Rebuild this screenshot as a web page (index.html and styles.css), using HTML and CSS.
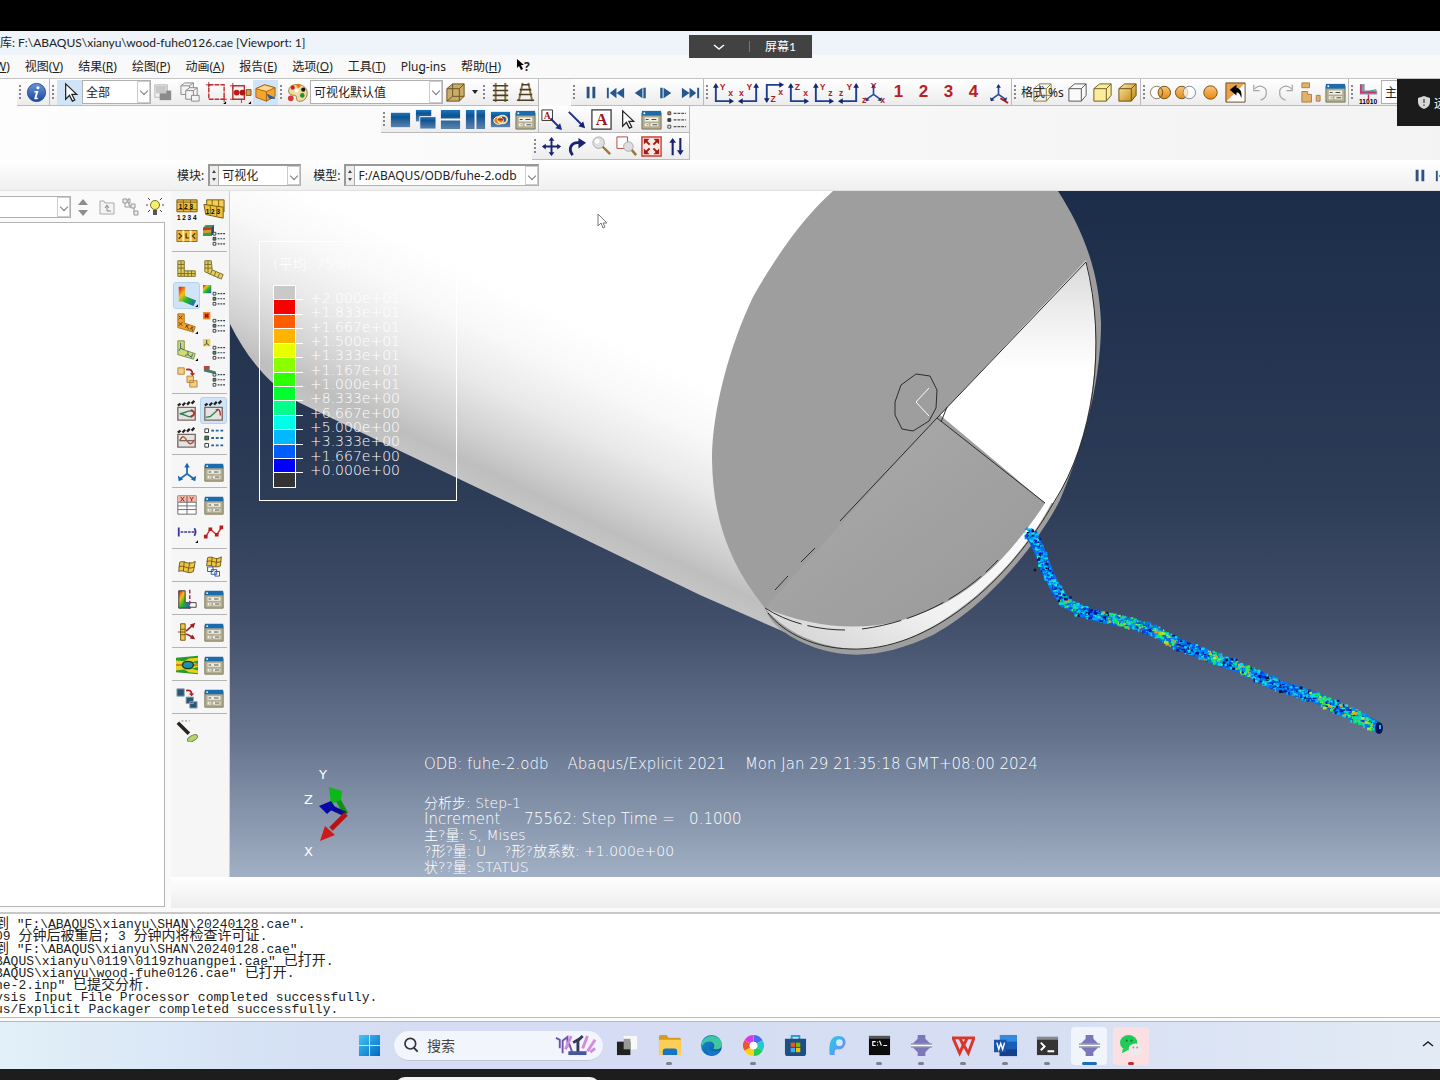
FILE: index.html
```html
<!DOCTYPE html>
<html lang="zh-CN">
<head>
    <meta charset="UTF-8">
    <meta name="viewport" content="width=device-width, initial-scale=1.0">
    <title>Abaqus/CAE</title>
    <link rel="stylesheet" href="styles.css">
</head>
<body>
    <!-- Icon sprite -->
    <svg class="sprite" width="0" height="0" aria-hidden="true">
        <defs>
            <linearGradient id="g-blue" x1="0" y1="0" x2="0" y2="1"><stop offset="0" stop-color="#1b78c0"/><stop offset=".3" stop-color="#0f5291"/><stop offset="1" stop-color="#5b84ad"/></linearGradient>
            <linearGradient id="g-info" x1="0" y1="0" x2="0" y2="1"><stop offset="0" stop-color="#6d95d6"/><stop offset="1" stop-color="#17479b"/></linearGradient>
            <linearGradient id="g-gold" x1="0" y1="0" x2="1" y2="1"><stop offset="0" stop-color="#ffe9a0"/><stop offset="1" stop-color="#b98412"/></linearGradient>
            <linearGradient id="g-orange" x1="0" y1="0" x2="0" y2="1"><stop offset="0" stop-color="#f9c47a"/><stop offset="1" stop-color="#e28a10"/></linearGradient>
            <linearGradient id="g-rain" x1="0" y1="0" x2="1" y2="1"><stop offset="0" stop-color="#e01010"/><stop offset=".3" stop-color="#f6c018"/><stop offset=".55" stop-color="#28b828"/><stop offset="1" stop-color="#1558d8"/></linearGradient>
            <linearGradient id="g-win" x1="0" y1="0" x2="1" y2="1"><stop offset="0" stop-color="#45c6f5"/><stop offset="1" stop-color="#0067c0"/></linearGradient>
            <linearGradient id="g-edge" x1="0" y1="0" x2="1" y2="1"><stop offset="0" stop-color="#1596d6"/><stop offset="1" stop-color="#0b4a9c"/></linearGradient>
            <linearGradient id="g-p" x1="0" y1="0" x2="1" y2="1"><stop offset="0" stop-color="#20d0e0"/><stop offset=".5" stop-color="#4aa8f0"/><stop offset="1" stop-color="#a86ae8"/></linearGradient>
        </defs>
        <symbol id="info" viewBox="0 0 24 24"><circle cx="12" cy="12" r="9.5" fill="url(#g-info)" stroke="#2a5298"/><circle cx="13.5" cy="7" r="1.6" fill="#fff"/><path d="M10 10.500h4l-2 7h2l-1 1.500h-3.500l2-7h-2z" fill="#fff"/></symbol>
        <symbol id="arrow" viewBox="0 0 24 24"><path d="M8 3v16l4-4 3 6 2.500-1.200-3-5.800h5z" fill="#fff" stroke="#222" stroke-width="1.300"/></symbol>
        <symbol id="squares" viewBox="0 0 24 24"><path d="M3 4h13v13H3z" fill="#f2f2f2" stroke="#b5b5b5"/><path d="M8 10h12v10H8z" fill="#8b8b8b"/><path d="M4 5h11v8H4z" fill="#c8c8c8"/></symbol>
        <symbol id="wirecubes" viewBox="0 0 24 24"><g fill="#f4f4f4" stroke="#888"><path d="M2 5l4-3h9v8l-4 4H2zM2 5h9v9M11 5l4-3"/><path d="M7 10l4-3h8v8l-4 4H7zM7 10h8v9M15 10l4-3"/><path d="M13 15h8v6h-8z"/></g></symbol>
        <symbol id="dashbox" viewBox="0 0 24 24"><path d="M5 4h16v15H5z" fill="none" stroke="#c03030" stroke-width="1.500" stroke-dasharray="5 1"/><path d="M2 4h6M5 1v6M18 19h6M21 16v6" stroke="#a03030"/><path d="M23 21v3h-3z"/></symbol>
        <symbol id="dotbox" viewBox="0 0 24 24"><path d="M4 5h12v14H4z" fill="none" stroke="#c03030" stroke-width="1.500"/><path d="M1 5h6M4 2v6M1 19h5M13 19v4" stroke="#c03030"/><circle cx="8" cy="12" r="3" fill="#c01818"/><circle cx="14" cy="12" r="3" fill="#b01414"/><path d="M18 9h5v6h-5z" fill="#d6a24a" stroke="#76521a"/><path d="M23 21v3h-3z"/></symbol>
        <symbol id="box" viewBox="0 0 24 24"><path d="M2 8l9-4 11 3v9l-9 5-11-4z" fill="#f3a530" stroke="#a8660d"/><path d="M2 8l11 3 9-4-11-3z" fill="#ffd68a" stroke="#a8660d"/><path d="M13 11v10" stroke="#a8660d"/><path d="M22 18l-8-4 2 4z" fill="#2a5aa8" stroke="#2a5aa8"/></symbol>
        <symbol id="palette" viewBox="0 0 24 24"><path d="M3 9c1-7 17-8 19 2 1 7-4 11-9 10-4-1 0-5-4-6-4 0-7-2-6-6z" fill="#f0dca0" stroke="#9a7a34"/><circle cx="7" cy="7" r="2.200" fill="#d02020"/><circle cx="13" cy="5" r="2.200" fill="#e07a18"/><circle cx="18" cy="9" r="2.200" fill="#181818"/><circle cx="17" cy="15" r="2.400" fill="#22902a"/><circle cx="11" cy="10" r="2" fill="#fff"/><circle cx="5" cy="18" r="3" fill="#d83a3a"/></symbol>
        <symbol id="tancube" viewBox="0 0 24 24"><path d="M3 8l6-5h12v13l-5 5H3z" fill="#c8ab66"/><path d="M3 8h13v13H3zM3 8l6-5h12v13l-5 5M16 8l5-5M9 3v13l-6 5M9 16h12" fill="none" stroke="#6b5422"/></symbol>
        <symbol id="ladder" viewBox="0 0 24 24"><path d="M7 2v20M17 2v20" stroke="#8a7440" stroke-width="2"/><path d="M4 5h16M4 10h16M4 15h16M4 20h16" stroke="#4c3f20" stroke-width="1.600"/></symbol>
        <symbol id="ladder2" viewBox="0 0 24 24"><path d="M9 2L5 21M15 2l4 19" stroke="#8a7440" stroke-width="2"/><path d="M8 4h8M6 9h12M5 14h14M3 20h18" stroke="#4c3f20" stroke-width="1.600"/></symbol>
        <symbol id="pause" viewBox="0 0 24 24"><path d="M8 6h3v12H8zM14 6h3v12h-3z" fill="#2c5283"/></symbol>
        <symbol id="first" viewBox="0 0 24 24"><path d="M3 7h2v11H3zM13 7v11l-7-5.500zM21 7v11l-8-5.500z" fill="#24588f"/></symbol>
        <symbol id="prev" viewBox="0 0 24 24"><path d="M14 7v11l-8-5.500zM15 7h2.500v11H15z" fill="#24588f"/></symbol>
        <symbol id="next" viewBox="0 0 24 24"><path d="M10 7v11l8-5.500zM6.500 7H9v11H6.500z" fill="#24588f"/></symbol>
        <symbol id="last" viewBox="0 0 24 24"><path d="M19 7h2v11h-2zM11 7v11l7-5.500zM3 7v11l8-5.500z" fill="#24588f"/></symbol>
        <symbol id="ax-r" viewBox="0 0 24 24"><path d="M4 5v16h15" fill="none" stroke="#1d3f95" stroke-width="2"/><path d="M1 7l3-5 3 5zM18 18l5 3-5 3z" fill="#14266e"/></symbol>
        <symbol id="ax-l" viewBox="0 0 24 24"><path d="M20 5v16H5" fill="none" stroke="#1d3f95" stroke-width="2"/><path d="M17 7l3-5 3 5zM6 18l-5 3 5 3z" fill="#14266e"/></symbol>
        <symbol id="ax-d" viewBox="0 0 24 24"><path d="M5 19V4h14" fill="none" stroke="#1d3f95" stroke-width="2"/><path d="M2 18l3 5 3-5zM18 1l5 3-5 3z" fill="#14266e"/></symbol>
        <symbol id="triad" viewBox="0 0 24 24"><path d="M12 5v9l-7 5M12 14l7 5" fill="none" stroke="#2a4a9a" stroke-width="1.700"/><path d="M9.500 7L12 3l2.500 4zM3 17l1 4 4-1zM21 17l-1 4-4-1z" fill="#16307c"/></symbol>
        <symbol id="triad-blue" viewBox="0 0 24 24"><path d="M12 5v9l-7 5M12 14l7 5" fill="none" stroke="#2a6db0" stroke-width="2"/><path d="M9 7l3-5 3 5zM2 16l1 6 5-2zM22 16l-1 6-5-2z" fill="#1667b8"/></symbol>
        <symbol id="cube-w" viewBox="0 0 24 24"><path d="M3 8l6-5h12v12l-5 6H3z" fill="#fafafa"/><path d="M3 8h13v13H3zM3 8l6-5h12v12l-5 6M16 8l5-5" fill="none" stroke="#555"/></symbol>
        <symbol id="cube-y" viewBox="0 0 24 24"><path d="M3 8l6-5h12v12l-5 6H3z" fill="#fbec9c"/><path d="M3 8h13v13H3zM3 8l6-5h12v12l-5 6M16 8l5-5" fill="none" stroke="#6c5d20"/></symbol>
        <symbol id="cube-g" viewBox="0 0 24 24"><path d="M3 8l6-5h12v12l-5 6H3z" fill="url(#g-gold)"/><path d="M3 8h13v13H3zM3 8l6-5h12v12l-5 6M16 8l5-5" fill="none" stroke="#6c5010"/></symbol>
        <symbol id="cube-f" viewBox="0 0 24 24"><path d="M3 8h13v13H3zM3 8l6-5h12v12l-5 6M16 8l5-5M9 3v12l-6 6M9 15h12" fill="none" stroke="#8b813c"/></symbol>
        <symbol id="both" viewBox="0 0 24 24"><circle cx="8" cy="12" r="6.5" fill="#fff" stroke="#8b7a5a"/><circle cx="16" cy="12" r="6.5" fill="url(#g-orange)" stroke="#6b4e1c"/><path d="M12 7a6.500 6.500 0 0 1 0 10" fill="none" stroke="#6b4e1c"/></symbol>
        <symbol id="union" viewBox="0 0 24 24"><circle cx="8" cy="12" r="6.5" fill="url(#g-orange)" stroke="#6b4e1c"/><circle cx="16" cy="12" r="6.5" fill="#fff" fill-opacity=".7" stroke="#7788a0"/></symbol>
        <symbol id="dot" viewBox="0 0 24 24"><circle cx="12" cy="12" r="7" fill="url(#g-orange)" stroke="#7c5410"/></symbol>
        <symbol id="swap" viewBox="0 0 24 24"><path d="M2 2h20v20H2z" fill="#fff"/><path d="M2 2h20L2 22z" fill="#e9a24a"/><path d="M2 2h20v20H2z" fill="none" stroke="#6a4c20"/><path d="M6 9l7-5v3c5 1 6 6 5 11-1-4-2-6-5-6v3z"/></symbol>
        <symbol id="undo" viewBox="0 0 24 24"><path d="M6 8c5-5 13-2 12 5 0 4-3 6-6 7M5 4v6h6" fill="none" stroke="#a4a4a4" stroke-width="1.300"/></symbol>
        <symbol id="redo" viewBox="0 0 24 24"><path d="M18 8c-5-5-13-2-12 5 0 4 3 6 6 7M19 4v6h-6" fill="none" stroke="#a4a4a4" stroke-width="1.300"/></symbol>
        <symbol id="parts" viewBox="0 0 24 24"><path d="M3 2h8v5H3zM3 11h6v3h4v8H3zM18 15h4v6h-4z" fill="#e5b168" stroke="#a08050"/></symbol>
        <symbol id="dialog" viewBox="0 0 24 24"><path d="M2 5h20v17H2z" fill="#b3ae92" stroke="#777358"/><path d="M2 3h20v5H2z" fill="#1c6cad"/><circle cx="4.500" cy="5.500" r="1" fill="#fff"/><path d="M5 10h14v4H5zM5 16h4v3H5zM11 16h8v3h-8z" fill="#f2f1e6"/><path d="M6 12h3M12 12h5M7 17.500h1M13 17.500h5" stroke="#444"/></symbol>
        <symbol id="beam" viewBox="0 0 24 24"><path d="M3 3h5v7h13v4H3z" fill="#8d93a8"/><path d="M4 4v9M5 12h15" stroke="#c8306a" stroke-width="1.500"/><path d="M8 12l12-3" stroke="#1c9a8a"/><path d="M12 14v5" stroke="#c03060" stroke-width="1.500"/></symbol>
        <symbol id="win1" viewBox="0 0 24 24"><path d="M2 5h20v15H2z" fill="url(#g-blue)"/></symbol>
        <symbol id="win-cas" viewBox="0 0 24 24"><path d="M2 2h16v12H2z" fill="url(#g-blue)"/><path d="M6 9h17v13H6z" fill="url(#g-blue)" stroke="#f6f6f6"/></symbol>
        <symbol id="win-h" viewBox="0 0 24 24"><path d="M2 2h20v9H2zM2 13h20v9H2z" fill="url(#g-blue)"/></symbol>
        <symbol id="win-v" viewBox="0 0 24 24"><path d="M2 2h9v20H2zM13 2h9v20h-9z" fill="url(#g-blue)"/></symbol>
        <symbol id="win-link" viewBox="0 0 24 24"><path d="M2 4h20v16H2z" fill="url(#g-blue)"/><ellipse cx="10" cy="13" rx="5" ry="4" fill="#e88218" stroke="#fff"/><ellipse cx="14" cy="12" rx="5" ry="4" fill="none" stroke="#ffe6a8" stroke-width="1.800"/><path d="M9 12h6" stroke="#c02818" stroke-width="2"/></symbol>
        <symbol id="a-arrow" viewBox="0 0 24 24"><path d="M2 2h11v11H2z" fill="#fff" stroke="#333"/><path d="M11 11l10 10" stroke="#1c2c88" stroke-width="2"/><path d="M23 23l-7-2 5-5z" fill="#1c2c88"/></symbol>
        <symbol id="line-arrow" viewBox="0 0 24 24"><path d="M4 4l14 14" stroke="#1c2c88" stroke-width="2"/><path d="M21 21l-7-2 5-5z" fill="#14206c"/></symbol>
        <symbol id="a-box" viewBox="0 0 24 24"><path d="M2 2h20v20H2z" fill="#fff" stroke="#333" stroke-width="1.300"/></symbol>
        <symbol id="list" viewBox="0 0 24 24"><g fill="#fff" stroke="#444"><path d="M3 4h3v3H3z" fill="#d89838"/><path d="M3 11h3v3H3z" fill="#1a3a66"/><path d="M3 18h3v3H3z"/></g><path d="M9 5.500h13M9 12.500h13M9 19.500h13" stroke="#555" stroke-width="1.300" stroke-dasharray="3 1"/></symbol>
        <symbol id="move" viewBox="0 0 24 24"><path d="M12 4v16M4 12h16" stroke="#1c2470" stroke-width="2"/><path d="M9 6l3-4 3 4zM9 18l3 4 3-4zM6 9l-4 3 4 3zM18 9l4 3-4 3z" fill="#1c2470"/></symbol>
        <symbol id="rotate" viewBox="0 0 24 24"><path d="M8 21c-5-6-2-14 7-13" fill="none" stroke="#1c2470" stroke-width="3"/><path d="M14 3l8 5-8 6z" fill="#1c2470"/></symbol>
        <symbol id="zoomer" viewBox="0 0 24 24"><path d="M13 12l8 8" stroke="#9a7638" stroke-width="2.500"/><circle cx="9" cy="8" r="6" fill="#dedede" stroke="#aaa"/><circle cx="7.500" cy="6.500" r="2.500" fill="#fff"/></symbol>
        <symbol id="zoombox" viewBox="0 0 24 24"><path d="M2 2h11v12H2z" fill="#fff" stroke="#b84444"/><path d="M17 15l5 6" stroke="#9a7638" stroke-width="2.500"/><circle cx="14" cy="12" r="5" fill="#dedede" stroke="#aaa"/></symbol>
        <symbol id="fit" viewBox="0 0 24 24"><path d="M2 2h20v20H2z" fill="#fce9e4" stroke="#d03c34" stroke-width="1.500"/><path d="M4 4h6l-6 6zM20 4h-6l6 6zM4 20h6l-6-6zM20 20h-6l6-6z" fill="#a01c18"/><path d="M6 6l4 4M18 6l-4 4M6 18l4-4M18 18l-4-4" stroke="#a01c18" stroke-width="2"/></symbol>
        <symbol id="updown" viewBox="0 0 24 24"><path d="M8 5v16M16 3v16" stroke="#1c2470" stroke-width="2.200"/><path d="M4.500 8L8 3l3.500 5zM12.500 16l3.500 5 3.500-5z" fill="#1c2470"/></symbol>
        <symbol id="film" viewBox="0 0 24 24"><path d="M1 2h22v13H1z" fill="#f0c040" stroke="#6c5410"/><path d="M8 2v13M16 2v13M1 4.500h22M1 12.500h22" stroke="#7c6010"/></symbol>
        <symbol id="film2" viewBox="0 0 24 24"><path d="M4 2h19v13H4z" fill="#f4cf4c" stroke="#6c5410"/><path d="M1 7l21 3v12L3 18z" fill="#f0c040" stroke="#6c5410"/><path d="M8 8v10M15 9v11M10 2v6M17 2v7" stroke="#7c6010"/></symbol>
        <symbol id="film3" viewBox="0 0 24 24"><path d="M1 6h22v12H1z" fill="#f0b83c" stroke="#8c6410"/><path d="M8 6v12M16 6v12" stroke="#fff3c8" stroke-width="2"/><path d="M3 9l3 3-3 3M11 9v5h3M21 9l-3 3 3 3" fill="none" stroke="#553c08" stroke-width="1.500"/></symbol>
        <symbol id="opts" viewBox="0 0 24 24"><g fill="#fff" stroke="#333"><path d="M11 8h3v3h-3zM11 19h3v3h-3z"/><path d="M11 13.500h3v3h-3z" fill="#5a9a68"/></g><path d="M16 9.500h8M16 15h8M16 20.500h8" stroke="#28425e" stroke-width="1.300" stroke-dasharray="2 1"/></symbol>
        <symbol id="c-layers" viewBox="0 0 24 24"><path d="M0 3l3-3h9v9l-3 3H0z" fill="#3c9a4a"/><path d="M0 3h9v3H0z" fill="#c83434"/><path d="M0 6l12-1v3l-12 1z" fill="#d8a020"/><path d="M9 3l3-3v9l-3 3z" fill="#235088"/></symbol>
        <symbol id="mesh" viewBox="0 0 24 24"><path d="M2 3h7v11h12v6H2z" fill="#e6cf58"/><path d="M2 3h7v11h12v6H2zM5.500 3v17M2 7h7M2 11h7M2 17h19M9 14v6M13 14v6M17 14v6" fill="none" stroke="#74682a"/></symbol>
        <symbol id="mesh-d" viewBox="0 0 24 24"><path d="M2 3h7l1 10 12 5-2 5-18-8z" fill="#e6cf58"/><path d="M2 3h7l1 10 12 5-2 5-18-8zM5.500 3v13M2 7h7M2 11h8M10 13l-2 5M14 15l-2 5M18 17l-2 5" fill="none" stroke="#74682a"/></symbol>
        <symbol id="contour" viewBox="0 0 24 24"><path d="M3 2h7v10l12 5-3 6-12-5H3z" fill="url(#g-rain)"/><path d="M24 21v3h-3z"/></symbol>
        <symbol id="c-rain" viewBox="0 0 24 24"><path d="M0 0h9v9H0z" fill="url(#g-rain)"/></symbol>
        <symbol id="mesh-x" viewBox="0 0 24 24"><path d="M2 2h7v10l12 4-2 6-17-5z" fill="#f0a030" stroke="#a0761c"/><path d="M3 4l4 4M7 4L3 8M3 11l4 4M7 11l-4 4M11 14l3 5M14 14l-4 3M17 16l1 5M19 16l-4 3" stroke="#684010"/><path d="M24 21v3h-3z"/></symbol>
        <symbol id="c-x" viewBox="0 0 24 24"><path d="M0 0h8v8H0z" fill="#f38a20"/><path d="M2 2l4 4M6 2L2 6" stroke="#b01010" stroke-width="2"/></symbol>
        <symbol id="mesh-y" viewBox="0 0 24 24"><path d="M2 2h7v10l12 4-2 6-17-5z" fill="#cfdc74" stroke="#7c8a3c"/><path d="M5 4v6l-2 3M5 10l4 2M13 13v4M10 18l3-1 4 3M18 16l-1 4" stroke="#2c5a88" fill="none"/><path d="M24 21v3h-3z"/></symbol>
        <symbol id="c-y" viewBox="0 0 24 24"><path d="M0 0h8v8H0z" fill="#ecd45a"/><path d="M4 1v4L1 7M4 5l3 2" stroke="#444" fill="none"/></symbol>
        <symbol id="overlay" viewBox="0 0 24 24"><path d="M2 2h7v7H2zM12 11h7v7h-7zM15 16h8v7h-8z" fill="#f4cd80" stroke="#b4843c"/><path d="M11 4c5-1 7 1 7 5" fill="none" stroke="#b02020" stroke-width="2"/><path d="M15 8h6l-3 3z" fill="#b02020"/></symbol>
        <symbol id="c-multi" viewBox="0 0 24 24"><path d="M1 0h6v4l7 2v3L1 6z" fill="#4a7a68"/><path d="M1 0h6v3H1z" fill="#b44"/></symbol>
        <symbol id="clap" viewBox="0 0 24 24"><path d="M2 8h19v14H2z" fill="#e4e2e2" stroke="#7a6a6a" stroke-width="1.500"/><path d="M2 6l3-2M7 6l3-3M12 5l3-3M17 4l3-3" stroke="#222" stroke-width="2.500"/></symbol>
        <symbol id="opts-big" viewBox="0 0 24 24"><g fill="#fff" stroke="#333"><path d="M2 2h4v4H2zM2 18h4v4H2z"/><path d="M2 10h4v4H2z" fill="#3a8a50"/></g><path d="M9 4h15M9 12h15M9 20h15" stroke="#28629e" stroke-width="2" stroke-dasharray="3 2"/></symbol>
        <symbol id="xytable" viewBox="0 0 24 24"><path d="M2 2h20v20H2z" fill="#fff" stroke="#666"/><path d="M2 2h20v7H2z" fill="#efb8a8"/><path d="M2 9h20M2 13h20M2 17h20M12 2v20" stroke="#666"/><path d="M5 3l4 5M9 3L5 8M15 3l2 3 2-3M17 6v2" fill="none" stroke="#a01818"/></symbol>
        <symbol id="probe" viewBox="0 0 24 24"><path d="M3 7v10M20 8c2 3 2 5 0 8" stroke="#38389c" stroke-width="2" fill="none"/><path d="M5 12h15" stroke="#38389c" stroke-width="1.800" stroke-dasharray="3 1"/><path d="M24 21v3h-3z"/></symbol>
        <symbol id="zigzag" viewBox="0 0 24 24"><path d="M3 17l5-8 7 6 6-9" fill="none" stroke="#c43030" stroke-width="1.500"/><path d="M1 15h4v4H1zM6 7h4v4H6zM13 13h4v4h-4zM18 5h4v4h-4z" fill="#b81c1c"/></symbol>
        <symbol id="flag" viewBox="0 0 24 24"><path d="M4 8c5-3 8 4 17-1l-2 11c-7 4-10-3-16 0z" fill="#eec548" stroke="#6d5412"/><path d="M3 13c6-3 9 4 17 0M9 7L8 18M15 8l-2 11" fill="none" stroke="#6d5412"/></symbol>
        <symbol id="flag2" viewBox="0 0 24 24"><path d="M5 3c5-3 8 4 15-1l-1 10c-7 3-9-2-15 0z" fill="#eec548" stroke="#6d5412"/><path d="M4 7c6-2 9 3 16 0M10 2L9 12M15 4l-1 9" fill="none" stroke="#6d5412"/><path d="M5 13h6v5H5zM9 16h6v5H9zM13 18h5v5h-5z" fill="#fff" stroke="#2b4d9a"/></symbol>
        <symbol id="cut" viewBox="0 0 24 24"><path d="M3 3h7v13h5v6H3z" fill="url(#g-rain)" stroke="#333"/><path d="M15 16h7v5h-7" fill="#fff" stroke="#333"/><path d="M15 2v21" stroke="#b02060" stroke-width="1.600" stroke-dasharray="4 2"/></symbol>
        <symbol id="burst" viewBox="0 0 24 24"><path d="M5 3h5v18H5z" fill="#eec548" stroke="#6d5412"/><path d="M5 9h5M5 15h5M2 12h8" stroke="#6d5412"/><path d="M11 11l8-7M11 14l8 4" stroke="#9c2020" stroke-width="1.700"/><path d="M21 2l-6 2 4 4zM21 20l-6-1 3-4z" fill="#9c2020"/></symbol>
        <symbol id="flow" viewBox="0 0 24 24"><path d="M0 4l24-2v20L0 20z" fill="#2c9a28"/><path d="M0 7l9 1 5-3 10-1v3l-7 2 7 2v3l-7 2 7 2v3l-10-1-5-3-9 1z" fill="#e8d020"/><path d="M0 12h24" stroke="#c82020"/><ellipse cx="13" cy="12" rx="6" ry="4" fill="#2290a8" stroke="#0d3f20" stroke-width="1.500"/></symbol>
        <symbol id="stack" viewBox="0 0 24 24"><path d="M1 2h8v8H1zM11 11h8v7h-8zM15 16h8v7h-8z" fill="#2d5476" stroke="#8aa"/><path d="M11 4c5-1 6 1 6 4" fill="none" stroke="#b02020" stroke-width="2"/><path d="M14 7h6l-3 3z" fill="#b02020"/></symbol>
        <symbol id="pen" viewBox="0 0 24 24"><path d="M2 3l12 12" stroke="#2a2420" stroke-width="4"/><path d="M6 1h9" stroke="#777" stroke-dasharray="2 2"/><ellipse cx="18" cy="20" rx="6" ry="3" transform="rotate(-30 18 20)" fill="#b7d36c" stroke="#6f8844"/></symbol>
        <symbol id="spin" viewBox="0 0 24 24"><path d="M7 10l5-6 5 6zM7 15l5 6 5-6z" fill="#8d8d8d"/></symbol>
        <symbol id="folder-up" viewBox="0 0 24 24"><path d="M5 8V6h4l1 2h9v11H5z" fill="#f4f4f4" stroke="#aaa"/><path d="M10 13l2-3 2 3M12 11v5h4" fill="none" stroke="#888"/></symbol>
        <symbol id="tree" viewBox="0 0 24 24"><path d="M6 7v5h7M10 7v4h5v7" fill="none" stroke="#999"/><path d="M4 4h4v4H4zM12 9h4v4h-4zM9 4h2v4H9zM15 16h4v4h-4z" fill="#eee" stroke="#999"/></symbol>
        <symbol id="bulb" viewBox="0 0 24 24"><circle cx="12" cy="10" r="4.500" fill="#f6ef6a" stroke="#777030"/><path d="M10 15h4v5h-4z" fill="#555"/><path d="M5 10H3M21 10h-2M7 5L5 3M17 5l2-2M7 15l-2 2M17 15l2 2" stroke="#444"/></symbol>
        <!-- Taskbar -->
        <symbol id="windows" viewBox="0 0 24 24"><path d="M1 1h10.500v10.500H1zM12.500 1H23v10.500H12.500zM1 12.500h10.500V23H1zM12.500 12.500H23V23H12.500z" fill="url(#g-win)"/></symbol>
        <symbol id="mag" viewBox="0 0 24 24"><circle cx="11" cy="10" r="8" fill="none" stroke="#333" stroke-width="2.500"/><path d="M16 16l6 6" stroke="#333" stroke-width="3"/></symbol>
        <symbol id="doodle" viewBox="0 0 44 24"><path d="M1 4l4 2v9M8 20V7l5-4v11M13 5l5 14" fill="none" stroke="#7156a8" stroke-width="2"/><path d="M11 16l6-14M29 15l5-13M34 18l8-12M37 19l5-4" stroke="#d58ae0" stroke-width="3"/><path d="M24 19V6l-5 3M24 7l5-5" fill="none" stroke="#343852" stroke-width="3"/><path d="M14 18h19v4H14z" fill="#4656a0"/></symbol>
        <symbol id="taskview" viewBox="0 0 24 24"><path d="M8 2h14v14H8z" fill="#f8f8f8"/><path d="M1 8h14v14H1z" fill="#222"/><path d="M8 5h7v11H8z" fill="#999"/></symbol>
        <symbol id="explorer" viewBox="0 0 24 24"><path d="M1 3q0-2 2-2h6l2 3h11q2 0 2 2v16H1z" fill="#d99a20"/><path d="M1 6h23v16H1z" fill="#fbcf55"/><path d="M5 22v-4q0-3 3-3h9q3 0 3 3v4z" fill="#1775c4"/></symbol>
        <symbol id="edge" viewBox="0 0 24 24"><circle cx="12" cy="12" r="11" fill="url(#g-edge)"/><path d="M2 9C6-1 22 0 23 11c0 5-6 6-9 4 3-4-1-8-5-7-4 0-6 2-7 6z" fill="#40c7a0"/><path d="M9 11c-2 5 3 9 12 6-2 3-5 6-9 6-5-1-7-8-3-12z" fill="#1478cc"/></symbol>
        <symbol id="ring" viewBox="0 0 24 24"><circle cx="12" cy="12" r="11" fill="#fff"/><g fill="none" stroke-width="7"><path d="M12 4.500A7.500 7.500 0 0 1 18.500 8.250" stroke="#4a6df0"/><path d="M18.500 8.250A7.500 7.500 0 0 1 18.500 15.750" stroke="#20c8d0"/><path d="M18.500 15.750A7.500 7.500 0 0 1 12 19.500" stroke="#25c85a"/><path d="M12 19.500A7.500 7.500 0 0 1 5.500 15.750" stroke="#f2d51c"/><path d="M5.500 15.750A7.500 7.500 0 0 1 5.500 8.250" stroke="#f2542c"/><path d="M5.500 8.250A7.500 7.500 0 0 1 12 4.500" stroke="#da3be0"/></g><circle cx="12" cy="12" r="4" fill="#fff"/></symbol>
        <symbol id="store" viewBox="0 0 24 24"><path d="M8 6V2h8v4" fill="none" stroke="#2a9fd8" stroke-width="2"/><path d="M1 5h22v15q0 3-3 3H4q-3 0-3-3z" fill="#1c4f82"/><path d="M7 9h4.500v4.500H7z" fill="#f25022"/><path d="M12.500 9H17v4.500h-4.500z" fill="#7fba00"/><path d="M7 14.500h4.500V19H7z" fill="#2fb4f0"/><path d="M12.500 14.500H17V19h-4.500z" fill="#ffb900"/></symbol>
        <symbol id="papp" viewBox="0 0 24 24"><path d="M4 22c-1-8-1-20 9-20 11 0 9 15-1 14-3 0-3 2-3 6z" fill="url(#g-p)"/><circle cx="14" cy="9" r="3.500" fill="#cdeaff"/></symbol>
        <symbol id="cmd" viewBox="0 0 24 24"><path d="M1 2h22v20H1z" fill="#0c0c0c"/><path d="M1 2h22v3H1z" fill="#555"/><path d="M8 8H5v4h3M10 8v1M10 11v1M12 7l2 5M16 12h4" fill="none" stroke="#fff" stroke-width="1.200"/></symbol>
        <symbol id="abq" viewBox="0 0 24 24"><path d="M8 1h8v4l5 5H3l5-5zM3 14h18l-5 5v4H8v-4z" fill="#7a78b8"/><path d="M1 10h22v4H1z" fill="#62628a"/><path d="M1 11h22v2H1z" fill="#fff"/></symbol>
        <symbol id="wps" viewBox="0 0 24 24"><path d="M1 4h22l-6 16-5-9-4 9zM8 4l4 8 4-8" fill="none" stroke="#dd3428" stroke-width="3"/></symbol>
        <symbol id="word" viewBox="0 0 24 24"><path d="M6 1h18v22H6z" fill="#2f8ae0"/><path d="M6 8h18v15H6z" fill="#1c5cb6"/><path d="M6 16h18v7H6z" fill="#143f8a"/><path d="M0 6h13v13H0z" fill="#1a55aa"/><path d="M3 9l2 7 2-6 2 6 2-7" fill="none" stroke="#fff" stroke-width="1.500"/></symbol>
        <symbol id="term" viewBox="0 0 24 24"><path d="M1 3h22v19H1z" fill="#343434"/><path d="M1 3h22v3H1z" fill="#8a8a8a"/><path d="M5 9l4 4-4 4M12 18h7" fill="none" stroke="#fff" stroke-width="2"/></symbol>
        <symbol id="wechat" viewBox="0 0 24 24"><ellipse cx="9" cy="9" rx="9" ry="8" fill="#20cc58"/><path d="M3 15l-1 5 6-3z" fill="#20cc58"/><circle cx="7" cy="7" r="1.200" fill="#14803a"/><circle cx="12" cy="7" r="1.200" fill="#14803a"/><ellipse cx="16" cy="16" rx="7" ry="6" fill="#efe9e9"/><circle cx="14" cy="14" r="1" fill="#999"/><circle cx="18" cy="14" r="1" fill="#999"/></symbol>
        <symbol id="chev-down" viewBox="0 0 12 12"><path d="M1 4l5 4 5-4" fill="none" stroke="currentColor" stroke-width="1.500"/></symbol>
    </svg>

    <div class="top-strip"></div>

    <header class="title-bar">
        <span>库: F:\ABAQUS\xianyu\wood-fuhe0126.cae [Viewport: 1]</span>
        <div class="screen-tab">
            <button aria-label="展开"><svg class="chev"><use href="#chev-down"/></svg></button>
            <span>屏幕1</span>
        </div>
    </header>

    <nav class="menu-bar">
        <button><u>W</u>)</button>
        <button>视图(<u>V</u>)</button>
        <button>结果(<u>R</u>)</button>
        <button>绘图(<u>P</u>)</button>
        <button>动画(<u>A</u>)</button>
        <button>报告(<u>E</u>)</button>
        <button>选项(<u>O</u>)</button>
        <button>工具(<u>T</u>)</button>
        <button>Plu<u>g</u>-ins</button>
        <button>帮助(<u>H</u>)</button>
        <button class="whats-this"><svg width="8" height="12" viewBox="0 0 8 12"><path d="M1 0v9l2-2 2 4 2-1-2-4h3z"/></svg>?</button>
    </nav>

    <div class="toolbars">
        <div class="toolbar-row first-row">
            <div class="toolbar main-tools">
                <i class="grip"></i>
                <button class="tool" aria-label="信息"><svg><use href="#info"/></svg></button>
                <i class="split"></i><i class="grip"></i>
                <button class="tool on" aria-label="选择"><svg><use href="#arrow"/></svg></button>
                <span class="combo combo-all"><select aria-label="选择范围"><option>全部</option></select></span>
                <button class="tool" aria-label="替换"><svg><use href="#squares"/></svg></button>
                <i class="space"></i>
                <button class="tool" aria-label="实体"><svg><use href="#wirecubes"/></svg></button>
                <button class="tool" aria-label="框选"><svg><use href="#dashbox"/></svg></button>
                <button class="tool" aria-label="框内"><svg><use href="#dotbox"/></svg></button>
                <button class="tool on" aria-label="外部实体"><svg><use href="#box"/></svg></button>
                <i class="grip"></i>
                <button class="tool" aria-label="颜色"><svg><use href="#palette"/></svg></button>
                <span class="combo combo-color"><select aria-label="颜色编码"><option>可视化默认值</option></select></span>
                <button class="tool" aria-label="半透明"><svg><use href="#tancube"/></svg></button>
                <button class="drop" aria-label="更多"></button>
                <i class="grip"></i>
                <button class="tool" aria-label="平行"><svg><use href="#ladder"/></svg></button>
                <button class="tool" aria-label="透视"><svg><use href="#ladder2"/></svg></button>
            </div>
            <div class="toolbar view-tools">
                <i class="grip"></i>
                <button class="tool" aria-label="暂停"><svg><use href="#pause"/></svg></button>
                <button class="tool" aria-label="首帧"><svg><use href="#first"/></svg></button>
                <button class="tool" aria-label="上一帧"><svg><use href="#prev"/></svg></button>
                <button class="tool" aria-label="下一帧"><svg><use href="#next"/></svg></button>
                <button class="tool" aria-label="末帧"><svg><use href="#last"/></svg></button>
                <i class="split"></i><i class="grip"></i>
                <button class="tool axis"><svg viewBox="0 0 24 24"><use href="#ax-r"/><text x="8" y="9">Y</text><text x="17" y="16">x</text></svg></button>
                <button class="tool axis"><svg viewBox="0 0 24 24"><use href="#ax-l"/><text x="10" y="9">Y</text><text x="2" y="16">x</text></svg></button>
                <button class="tool axis"><svg viewBox="0 0 24 24"><use href="#ax-d"/><text x="17" y="15">x</text><text x="9" y="22">Z</text></svg></button>
                <button class="tool axis"><svg viewBox="0 0 24 24"><use href="#ax-r"/><text x="8" y="9">Z</text><text x="17" y="16">x</text></svg></button>
                <button class="tool axis"><svg viewBox="0 0 24 24"><use href="#ax-r"/><text x="8" y="9">Y</text><text x="17" y="16">z</text></svg></button>
                <button class="tool axis"><svg viewBox="0 0 24 24"><use href="#ax-l"/><text x="10" y="9">Y</text><text x="2" y="16">z</text></svg></button>
                <button class="tool axis"><svg viewBox="0 0 24 24"><use href="#triad"/><text x="9" y="8">Y</text><text x="0" y="23">z</text><text x="19" y="23">x</text></svg></button>
                <button class="tool num">1</button>
                <button class="tool num">2</button>
                <button class="tool num">3</button>
                <button class="tool num">4</button>
                <button class="tool" aria-label="自定义视图"><svg viewBox="0 0 24 24"><use href="#triad"/><path d="M14 18l8 5" stroke="#b01818" stroke-width="2"/></svg></button>
                <i class="split"></i><i class="grip"></i>
                <button class="tool format"><svg><use href="#cube-f"/></svg><span>格式 %s</span></button>
                <button class="tool" aria-label="隐藏线"><svg><use href="#cube-w"/></svg></button>
                <button class="tool" aria-label="填充"><svg><use href="#cube-y"/></svg></button>
                <button class="tool" aria-label="阴影"><svg><use href="#cube-g"/></svg></button>
                <i class="split"></i><i class="grip"></i>
                <button class="tool" aria-label="替换"><svg><use href="#both"/></svg></button>
                <button class="tool" aria-label="移除"><svg><use href="#union"/></svg></button>
                <button class="tool" aria-label="全部"><svg><use href="#dot"/></svg></button>
                <button class="tool" aria-label="反转"><svg><use href="#swap"/></svg></button>
                <button class="tool" aria-label="撤销"><svg><use href="#undo"/></svg></button>
                <button class="tool" aria-label="重做"><svg><use href="#redo"/></svg></button>
                <button class="tool" aria-label="显示组"><svg><use href="#parts"/></svg></button>
                <button class="tool" aria-label="管理器"><svg><use href="#dialog"/></svg></button>
                <i class="split"></i><i class="grip"></i>
                <button class="tool beam"><svg viewBox="0 0 24 24"><use href="#beam"/><text x="2" y="24">11010</text></svg></button>
                <span class="combo combo-main"><select aria-label="场输出"><option>主变量</option></select></span>
            </div>
            <div class="safe-badge">
                <svg width="12" height="13" viewBox="0 0 12 13"><path d="M6 0l6 2v4q0 5-6 7Q0 11 0 6V2z" fill="#d8d8d8"/><path d="M6 3v4M6 8.500v1.500" stroke="#555" stroke-width="1.500"/></svg>
                <span>远程</span>
            </div>
        </div>
        <div class="toolbar-row">
            <div class="toolbar window-tools">
                <i class="grip"></i>
                <button class="tool" aria-label="新建视口"><svg><use href="#win1"/></svg></button>
                <button class="tool" aria-label="层叠"><svg><use href="#win-cas"/></svg></button>
                <button class="tool" aria-label="水平平铺"><svg><use href="#win-h"/></svg></button>
                <button class="tool" aria-label="垂直平铺"><svg><use href="#win-v"/></svg></button>
                <button class="tool" aria-label="链接视口"><svg><use href="#win-link"/></svg></button>
                <button class="tool" aria-label="视口管理器"><svg><use href="#dialog"/></svg></button>
                <i class="split"></i>
                <button class="tool note"><svg viewBox="0 0 24 24"><use href="#a-arrow"/><text x="4" y="11" font-size="10">A</text></svg></button>
                <button class="tool" aria-label="箭头"><svg><use href="#line-arrow"/></svg></button>
                <button class="tool note"><svg viewBox="0 0 24 24"><use href="#a-box"/><text x="6" y="18" font-size="17">A</text></svg></button>
                <button class="tool" aria-label="编辑注释"><svg><use href="#arrow"/></svg></button>
                <button class="tool" aria-label="注释管理器"><svg><use href="#dialog"/></svg></button>
                <button class="tool" aria-label="注释选项"><svg><use href="#list"/></svg></button>
            </div>
        </div>
        <div class="toolbar-row">
            <div class="toolbar pan-tools">
                <i class="grip"></i>
                <button class="tool" aria-label="平移"><svg><use href="#move"/></svg></button>
                <button class="tool" aria-label="旋转"><svg><use href="#rotate"/></svg></button>
                <button class="tool" aria-label="缩放"><svg><use href="#zoomer"/></svg></button>
                <button class="tool" aria-label="框缩放"><svg><use href="#zoombox"/></svg></button>
                <button class="tool" aria-label="适应"><svg><use href="#fit"/></svg></button>
                <button class="tool" aria-label="循环"><svg><use href="#updown"/></svg></button>
            </div>
        </div>
    </div>

    <div class="context-bar">
        <label for="module">模块:</label>
        <span class="combo stepped combo-module"><i class="steps"></i><select id="module"><option>可视化</option></select></span>
        <label for="model">模型:</label>
        <span class="combo stepped combo-model"><i class="steps"></i><select id="model"><option>F:/ABAQUS/ODB/fuhe-2.odb</option></select></span>
        <div class="play">
            <button class="tool" aria-label="暂停"><svg><use href="#pause"/></svg></button>
            <button class="tool" aria-label="首帧"><svg><use href="#first"/></svg></button>
        </div>
    </div>

    <main class="workspace">
        <aside class="model-tree">
            <div class="tree-tools">
                <span class="combo combo-tree"><select aria-label="会话数据"><option></option></select></span>
                <button aria-label="上下"><svg><use href="#spin"/></svg></button>
                <button aria-label="上级"><svg><use href="#folder-up"/></svg></button>
                <button aria-label="展开树"><svg><use href="#tree"/></svg></button>
                <button aria-label="提示"><svg><use href="#bulb"/></svg></button>
            </div>
            <div class="tree-pane"></div>
        </aside>

        <div class="toolbox">
            <div class="toolset">
                <button class="small-text"><svg viewBox="0 0 24 24"><use href="#film"/><text x="3" y="12">1 2 3</text><text x="1" y="24">1 2 3 4</text></svg></button>
                <button class="small-text"><svg viewBox="0 0 24 24"><use href="#film2"/><text x="3" y="17">1 2 3</text></svg></button>
                <button aria-label="帧选择"><svg><use href="#film3"/></svg></button>
                <button aria-label="结果选项"><svg viewBox="0 0 24 24"><use href="#c-layers"/><use href="#opts"/></svg></button>
            </div>
            <div class="toolset">
                <button aria-label="未变形图"><svg><use href="#mesh"/></svg></button>
                <button aria-label="变形图"><svg><use href="#mesh-d"/></svg></button>
                <button class="on" aria-label="云图"><svg><use href="#contour"/></svg></button>
                <button aria-label="云图选项"><svg viewBox="0 0 24 24"><use href="#c-rain"/><use href="#opts"/></svg></button>
                <button aria-label="符号图"><svg><use href="#mesh-x"/></svg></button>
                <button aria-label="符号选项"><svg viewBox="0 0 24 24"><use href="#c-x"/><use href="#opts"/></svg></button>
                <button aria-label="材料方向"><svg><use href="#mesh-y"/></svg></button>
                <button aria-label="方向选项"><svg viewBox="0 0 24 24"><use href="#c-y"/><use href="#opts"/></svg></button>
                <button aria-label="叠加"><svg><use href="#overlay"/></svg></button>
                <button aria-label="通用选项"><svg viewBox="0 0 24 24"><use href="#c-multi"/><use href="#opts"/></svg></button>
            </div>
            <div class="toolset">
                <button aria-label="缩放动画"><svg viewBox="0 0 24 24"><use href="#clap"/><path d="M4 15c6 0 8-4 14-3M4 15c6 0 8 5 14 3" fill="none" stroke="#2b7f4c" stroke-width="1.500"/><path d="M16 11c5 1 5 6 0 7" fill="none" stroke="#b22c2c" stroke-width="2"/></svg></button>
                <button class="on" aria-label="时间历程动画"><svg viewBox="0 0 24 24"><use href="#clap"/><path d="M3 19l5-1 8-7" fill="none" stroke="#2b8f4c" stroke-width="1.500"/><path d="M14 11c3-2 5 0 5 6" fill="none" stroke="#b22c2c" stroke-width="1.500"/></svg></button>
                <button aria-label="谐波动画"><svg viewBox="0 0 24 24"><use href="#clap"/><path d="M4 15h16" stroke="#333"/><path d="M4 15c4-8 6-3 8 0s5 6 8-1" fill="none" stroke="#b4542c" stroke-width="1.500"/></svg></button>
                <button aria-label="动画选项"><svg><use href="#opts-big"/></svg></button>
            </div>
            <div class="toolset single">
                <button aria-label="坐标系"><svg><use href="#triad-blue"/></svg></button>
                <button aria-label="坐标系管理器"><svg><use href="#dialog"/></svg></button>
            </div>
            <div class="toolset">
                <button aria-label="XY数据"><svg><use href="#xytable"/></svg></button>
                <button aria-label="XY管理器"><svg><use href="#dialog"/></svg></button>
                <button aria-label="路径"><svg><use href="#probe"/></svg></button>
                <button aria-label="XY选项"><svg><use href="#zigzag"/></svg></button>
            </div>
            <div class="toolset single">
                <button aria-label="场输出"><svg><use href="#flag"/></svg></button>
                <button aria-label="创建场输出"><svg><use href="#flag2"/></svg></button>
            </div>
            <div class="toolset single">
                <button aria-label="视图切割"><svg><use href="#cut"/></svg></button>
                <button aria-label="切割管理器"><svg><use href="#dialog"/></svg></button>
            </div>
            <div class="toolset single">
                <button aria-label="自由体"><svg><use href="#burst"/></svg></button>
                <button aria-label="自由体管理器"><svg><use href="#dialog"/></svg></button>
            </div>
            <div class="toolset single">
                <button aria-label="流线"><svg><use href="#flow"/></svg></button>
                <button aria-label="流线管理器"><svg><use href="#dialog"/></svg></button>
            </div>
            <div class="toolset single">
                <button aria-label="叠加图"><svg><use href="#stack"/></svg></button>
                <button aria-label="叠加管理器"><svg><use href="#dialog"/></svg></button>
            </div>
            <div class="toolset last">
                <button aria-label="清理"><svg><use href="#pen"/></svg></button>
            </div>
        </div>

        <section class="viewport">
            <svg class="scene" viewBox="230 191 1210 686" preserveAspectRatio="xMinYMin slice">
                <defs>
                    <linearGradient id="shade" gradientUnits="userSpaceOnUse" x1="457" y1="478" x2="540" y2="305">
                        <stop offset="0" stop-color="#c4c4c4"/><stop offset=".1" stop-color="#bebebe"/><stop offset=".25" stop-color="#d0d0d0"/><stop offset=".5" stop-color="#e9e9e9"/><stop offset=".75" stop-color="#f8f8f8"/><stop offset="1" stop-color="#fff"/>
                    </linearGradient>
                    <linearGradient id="fan" x1="0" y1="0" x2="1" y2="1"><stop offset="0" stop-color="#acacac"/><stop offset=".5" stop-color="#a2a2a2"/><stop offset="1" stop-color="#989898"/></linearGradient>
                    <linearGradient id="inner" x1="0" y1="0" x2="0" y2="1"><stop offset="0" stop-color="#d8d8d8"/><stop offset=".2" stop-color="#ececec"/><stop offset=".45" stop-color="#fff"/></linearGradient>
                    <linearGradient id="lip" x1="0" y1="1" x2="1" y2="0"><stop offset="0" stop-color="#cfcfcf"/><stop offset=".4" stop-color="#f0f0f0"/><stop offset="1" stop-color="#fff"/></linearGradient>
                </defs>
                <!-- cylinder -->
                <path d="M230 191H1000L840 640L820 649L780 630L700 595L543 519L457 478L377 440L298 402C270 385 248 360 230 324Z" fill="url(#shade)"/>
                <path d="M833 191C802 218 772 263 753 297C730 345 712 410 712 460C713 520 730 565 765 608C768 618 776 627 790 636C835 662 880 660 933 635C990 604 1040 540 1060 500C1090 430 1101 370 1101 323C1099 270 1083 230 1058 191Z" fill="#9e9e9e"/>
                <!-- hopper opening and lower lip -->
                <path d="M1086 260L940 415L1045 503H1054C1092 440 1107 345 1086 260Z" fill="url(#inner)"/>
                <path d="M765 608C790 638 830 650 865 649C940 643 1020 565 1052 502L1045 503C980 600 910 650 765 608Z" fill="url(#lip)"/>
                <path d="M765 608L937 418L1045 503C975 610 880 655 765 608Z" fill="url(#fan)"/>
                <g fill="none" stroke="#2c2c2c">
                    <path d="M1086 262L937 418L840 521M815 548L801 562M788 576L775 590"/>
                    <path d="M937 418L1045 503M947 407L941 422"/>
                    <path d="M765 608C790 624 820 630 845 630M862 629C930 620 975 585 998 560" stroke-dasharray="40 6"/>
                    <path d="M1086 262C1107 345 1094 440 1054 502C1010 580 930 652 850 649C815 648 785 634 768 613"/>
                    <path d="M916 374L930 376L937 390L936 408L929 421L913 431L902 429L895 415L895 402L901 385Z"/>
                    <path d="M929 388L916 402L929 416" stroke="#fff"/>
                </g>
                <!-- wire rope, coloured elements are added by the script -->
                <path id="rope" d="M1028 532C1036 540 1040 551 1043 560L1050 577Q1057 592 1064 600Q1076 611 1100 617L1123 621Q1147 627 1167 638L1187 648L1213 657L1240 668L1277 685L1317 698L1353 715L1378 727" fill="none" stroke="#0c6ce0" stroke-width="11"/>
                <g id="elements"></g>
                <ellipse cx="1379" cy="728" rx="4" ry="6" fill="#04145c"/><path d="M1380 725v4" stroke="#4ad" stroke-width="2"/>
                <circle cx="1035" cy="570" r="1.500" fill="#101828"/>
                <!-- triad -->
                <path d="M346 814L337 798" stroke="#0a9410" stroke-width="5"/><path d="M329 787L342 791L341 800L331 804Z" fill="#0cb818"/>
                <path d="M345 814L332 808" stroke="#0a0a8c" stroke-width="5"/><path d="M319 806L331 801L335 807L327 814Z" fill="#0808a8"/>
                <path d="M346 814L331 829" stroke="#b41414" stroke-width="5"/><path d="M325 826L335 835L320 841Z" fill="#d01818"/>
                <g class="triad-text"><text x="319" y="779">Y</text><text x="304" y="804">Z</text><text x="304" y="856">X</text></g>
                <path d="M598 214v12l3-3 2 5 2-1-2-4h4z" fill="#fff" stroke="#777"/>
            </svg>

            <div class="legend">
                <p class="legend-title">(平均: 75%)</p>
                <div class="legend-body">
                    <div class="swatches">
                        <i class="c0"></i><i class="c1"></i><i class="c2"></i><i class="c3"></i><i class="c4"></i><i class="c5"></i><i class="c6"></i>
                        <i class="c7"></i><i class="c8"></i><i class="c9"></i><i class="c10"></i><i class="c11"></i><i class="c12"></i><i class="c13"></i>
                    </div>
                    <div class="values">
                        <span>+2.000e+01</span><span>+1.833e+01</span><span>+1.667e+01</span><span>+1.500e+01</span><span>+1.333e+01</span>
                        <span>+1.167e+01</span><span>+1.000e+01</span><span>+8.333e+00</span><span>+6.667e+00</span><span>+5.000e+00</span>
                        <span>+3.333e+00</span><span>+1.667e+00</span><span>+0.000e+00</span>
                    </div>
                </div>
            </div>

            <div class="state">
                <p class="odb wide">ODB: fuhe-2.odb    Abaqus/Explicit 2021    Mon Jan 29 21:35:18 GMT+08:00 2024</p>
                <p>分析步: Step-1</p>
                <p class="wide">Increment     75562: Step Time =   0.1000</p>
                <p>主?量: S, Mises</p>
                <p>?形?量: U    ?形?放系数: +1.000e+00</p>
                <p>状??量: STATUS</p>
            </div>
        </section>
    </main>

    <section class="messages">
        <p><b>到</b> "F:\ABAQUS\xianyu\SHAN\20240128.cae".</p>
        <p>09 <b>分钟后被重启</b>; 3 <b>分钟内将检查许可证</b>.</p>
        <p><b>到</b> "F:\ABAQUS\xianyu\SHAN\20240128.cae".</p>
        <p>BAQUS\xianyu\0119\0119zhuangpei.cae" <b>已打开</b>.</p>
        <p>BAQUS\xianyu\wood-fuhe0126.cae" <b>已打开</b>.</p>
        <p>he-2.inp" <b>已提交分析</b>.</p>
        <p>ysis Input File Processor completed successfully.</p>
        <p>us/Explicit Packager completed successfully.</p>
    </section>

    <footer class="taskbar">
        <button class="app start" aria-label="开始"><svg><use href="#windows"/></svg></button>
        <label class="search">
            <svg class="mag"><use href="#mag"/></svg>
            <input type="text" placeholder="搜索">
            <svg class="doodle"><use href="#doodle"/></svg>
        </label>
        <button class="app" aria-label="任务视图"><svg><use href="#taskview"/></svg></button>
        <button class="app open" aria-label="资源管理器"><svg><use href="#explorer"/></svg></button>
        <button class="app" aria-label="Edge"><svg><use href="#edge"/></svg></button>
        <button class="app open" aria-label="浏览器"><svg><use href="#ring"/></svg></button>
        <button class="app" aria-label="商店"><svg><use href="#store"/></svg></button>
        <button class="app" aria-label="应用"><svg><use href="#papp"/></svg></button>
        <button class="app open" aria-label="命令提示符"><svg><use href="#cmd"/></svg></button>
        <button class="app open" aria-label="Abaqus"><svg><use href="#abq"/></svg></button>
        <button class="app open" aria-label="WPS"><svg><use href="#wps"/></svg></button>
        <button class="app open" aria-label="Word"><svg><use href="#word"/></svg></button>
        <button class="app open" aria-label="终端"><svg><use href="#term"/></svg></button>
        <button class="app open active" aria-label="Abaqus/CAE"><svg><use href="#abq"/></svg></button>
        <button class="app open alert" aria-label="微信"><svg><use href="#wechat"/></svg></button>
        <button class="tray" aria-label="隐藏的图标"><svg class="chev up"><use href="#chev-down"/></svg></button>
    </footer>
    <div class="bottom-strip"><i></i></div>

    <script src="script.js"></script>
</body>
</html>
```

FILE: styles.css
```css
:root {
    --ui: "Noto Sans", "Noto Sans CJK SC", sans-serif;
    --line: #b4b4b4;
    --on: #cfe5f7;
}

* {
    box-sizing: border-box;
    margin: 0;
    padding: 0;
}

body {
    height: 100vh;
    display: flex;
    flex-direction: column;
    overflow: hidden;
    background: #fafafa;
    color: #222;
    font-family: var(--ui);
    font-size: 12px;
}

button {
    border: none;
    background: none;
    font: inherit;
    color: inherit;
}

select, input {
    font: inherit;
    color: inherit;
    border: none;
    background: none;
    outline: none;
    appearance: none;
}

.sprite {
    position: absolute;
}

.top-strip {
    height: 31px;
    flex: none;
    background: #000;
}

/* Title and menu */
.title-bar {
    position: relative;
    height: 24px;
    flex: none;
    background: #eff3fa;
    font-family: Lato, "Noto Sans CJK SC", sans-serif;
    line-height: 23px;
    white-space: nowrap;
}

.screen-tab {
    position: absolute;
    top: 4px;
    left: 689px;
    width: 123px;
    height: 23px;
    display: flex;
    align-items: center;
    background: #424242;
    color: #fff;
    z-index: 2;
}

.screen-tab button {
    width: 61px;
    height: 11px;
    border-right: 1px solid #777;
    display: flex;
    justify-content: center;
}

.screen-tab span {
    padding-left: 15px;
}

.chev {
    width: 12px;
    height: 12px;
}

.chev.up {
    transform: rotate(180deg);
}

.menu-bar {
    height: 23px;
    flex: none;
    display: flex;
    gap: 15px;
    margin-left: -5px;
    background: #f9f9f9;
}

.menu-bar button {
    line-height: 22px;
    white-space: nowrap;
}

.menu-bar .whats-this {
    font-weight: bold;
}

/* Toolbars */
.toolbars {
    flex: none;
    background: linear-gradient(90deg, #fdfdfd, #f3f3f3);
}

.toolbar-row {
    position: relative;
    height: 27px;
    display: flex;
}

.first-row {
    height: 28px;
    border-top: 1px solid #c4c4c4;
}

.toolbar {
    display: flex;
    align-items: center;
    flex: none;
    border-right: 1px solid #bbb;
    border-bottom: 1px solid #bbb;
    background: linear-gradient(#fff, #ececec);
}

.main-tools {
    margin-left: 17px;
}

.view-tools {
    margin-left: 32px;
}

.window-tools {
    margin-left: 381px;
}

.pan-tools {
    margin-left: 532px;
}

.grip {
    width: 7px;
    height: 16px;
    flex: none;
    background: radial-gradient(circle at 3px 2px, #888 1px, transparent 1px) 0 0 / 7px 4px;
}

.split {
    width: 1px;
    align-self: stretch;
    background: #bbb;
}

.space {
    width: 2px;
}

.tool {
    width: 25px;
    height: 25px;
    flex: none;
    display: flex;
    align-items: center;
    justify-content: center;
}

.tool svg {
    width: 23px;
    height: 23px;
}

.tool.on {
    background: var(--on);
}

.drop {
    width: 13px;
    height: 25px;
    flex: none;
    display: flex;
    align-items: center;
    justify-content: center;
}

.drop::before {
    content: "";
    border: 3px solid transparent;
    border-top: 4px solid #222;
    border-bottom: none;
}

.axis text {
    font: bold 9px "Liberation Sans", sans-serif;
    fill: #ab2222;
}

.num {
    font: bold 17px "Liberation Sans", sans-serif;
    color: #b8201c;
}

.note text {
    font-family: "Liberation Serif", serif;
    font-weight: bold;
    fill: #a01420;
}

.beam text {
    font: bold 7px "Liberation Sans", sans-serif;
}

.format {
    position: relative;
    width: 46px;
}

.format span {
    position: absolute;
    left: 2px;
    font-size: 12px;
    white-space: nowrap;
}

.combo {
    position: relative;
    height: 24px;
    flex: none;
    display: flex;
    background: #fff;
    border: 1px solid #b0b0b0;
}

.combo select {
    width: 100%;
    padding-left: 3px;
    padding-right: 10px;
}

/* chevron */
.combo::after {
    content: "";
    position: absolute;
    right: 3px;
    top: 7px;
    width: 5px;
    height: 5px;
    border: solid #777;
    border-width: 0 1px 1px 0;
    transform: rotate(45deg);
    pointer-events: none;
}

.combo::before {
    content: "";
    position: absolute;
    right: 0;
    top: 0;
    bottom: 0;
    width: 11px;
    border: 1px solid #ccc;
    pointer-events: none;
}

.combo-all {
    width: 69px;
}

.combo-color {
    width: 133px;
}

.combo-main {
    width: 57px;
}

.safe-badge {
    position: absolute;
    right: 0;
    top: 0;
    width: 43px;
    height: 47px;
    padding-left: 21px;
    display: flex;
    align-items: center;
    gap: 4px;
    overflow: hidden;
    background: #1b1b1b;
    color: #fff;
    white-space: nowrap;
    z-index: 2;
}

.safe-badge svg {
    flex: none;
}

.context-bar {
    height: 31px;
    flex: none;
    display: flex;
    align-items: center;
    padding-left: 177px;
    background: linear-gradient(#fff, #f0f0f0);
    border-bottom: 1px solid #e2e2e2;
}

.context-bar .combo {
    height: 22px;
    margin: 0 12px 0 4px;
    border-top: 2px solid #999;
    border-left: 2px solid #999;
}

.combo-module {
    width: 93px;
}

.combo-model {
    width: 195px;
}

.steps {
    width: 9px;
    flex: none;
    display: flex;
    flex-direction: column;
    align-items: center;
    justify-content: space-evenly;
    border-right: 1px solid #aaa;
    background: #eee;
}

.steps::before, .steps::after {
    content: "";
    border: 2px solid transparent;
}

.steps::before {
    border-bottom: 3px solid #444;
    border-top: none;
}

.steps::after {
    border-top: 3px solid #444;
    border-bottom: none;
}

.play {
    flex: 1;
    display: flex;
    justify-content: flex-end;
    margin-right: -17px;
}

/* Workspace */
.workspace {
    flex: 1;
    min-height: 0;
    display: flex;
    background: linear-gradient(#f7f7f7 0 686px, #fff 686px, #ededed);
}

.model-tree {
    width: 171px;
    flex: none;
    display: flex;
    flex-direction: column;
    padding-right: 6px;
    background: #fafafa;
}

.tree-tools {
    height: 31px;
    flex: none;
    display: flex;
    align-items: center;
}

.tree-tools button {
    width: 25px;
    height: 24px;
}

.tree-tools button svg {
    width: 24px;
    height: 24px;
}

.combo-tree {
    width: 71px;
    height: 22px;
    border-left: none;
}

.tree-pane {
    flex: 1;
    background: #fff;
    border: 1px solid var(--line);
    border-left: none;
    margin-bottom: 1px;
}

.toolbox {
    width: 59px;
    flex: none;
    padding: 3px 2px 0 1px;
    border-right: 1px solid #d0d0d0;
    background: #f6f6f6;
    margin-bottom: 31px;
}

.toolset {
    display: flex;
    flex-wrap: wrap;
    padding: 3px 0 3px 1px;
    border-bottom: 1px solid var(--line);
}

.toolset:first-child {
    padding-top: 1px;
    padding-bottom: 2px;
}

.toolset.single {
    padding-bottom: 2px;
}

.toolset.last {
    border: none;
}

.toolset button {
    width: 27px;
    height: 27px;
    display: flex;
    align-items: center;
    justify-content: center;
}

.toolset svg {
    width: 22px;
    height: 22px;
}

.toolset .on {
    background: var(--on);
    border: 1px solid #b4d2ea;
    border-radius: 3px;
}

.small-text text {
    font: bold 7px "Liberation Sans", sans-serif;
}

/* Viewport */
.viewport {
    position: relative;
    flex: 1;
    margin-bottom: 31px;
    overflow: hidden;
    background: linear-gradient(#1b2d49, #2d3c57 45%, #424f6b 63%, #66748e 80%, #a2b0c5);
    color: #fff;
    font-family: "DejaVu Sans", "Noto Sans CJK SC", sans-serif;
    font-weight: 200;
    font-size: 14px;
}

.scene {
    position: absolute;
    width: 100%;
    height: 100%;
}

.triad-text {
    fill: #fff;
    font-size: 13px;
    font-weight: 400;
}

.legend {
    position: absolute;
    left: 29px;
    top: 50px;
    width: 198px;
    height: 260px;
    padding: 15px 0 0 13px;
    border: 1px solid #fff;
    line-height: 14px;
}

.legend-title {
    height: 28px;
}

.legend-body {
    display: flex;
}

.swatches {
    width: 23px;
    height: 203px;
    display: flex;
    flex-direction: column;
    border: 1px solid #fff;
}

.swatches i {
    position: relative;
    flex: 1;
    border-bottom: 1px solid #fff;
}

.swatches i::after {
    content: "";
    position: absolute;
    left: 22px;
    bottom: -1px;
    width: 7px;
    height: 1px;
    background: #fff;
}

.c0 { background: #c9c9c9; }
.c1 { background: #f80000; }
.c2 { background: #ff5d00; }
.c3 { background: #ffb400; }
.c4 { background: #e8ff00; }
.c5 { background: #8bff00; }
.c6 { background: #2eff00; }
.c7 { background: #00ff2e; }
.c8 { background: #00ff8b; }
.c9 { background: #00ffe8; }
.c10 { background: #00b9ff; }
.c11 { background: #005dff; }
.c12 { background: #0000ff; }
.swatches .c13 { background: #333; border: none; }
.swatches .c13::after { display: none; }

.values {
    height: 186px;
    margin: 6px 0 0 14px;
    display: flex;
    flex-direction: column;
    justify-content: space-between;
}

.state {
    position: absolute;
    left: 194px;
    bottom: 2px;
    line-height: 16px;
}

.state p {
    height: 16px;
    white-space: pre;
}

.state .wide {
    font-size: 15px;
}

.state .odb {
    margin-bottom: 23px;
}

/* Message area */
.messages {
    height: 106px;
    flex: none;
    margin-top: 4px;
    padding: 4px 0 1px;
    display: flex;
    flex-direction: column;
    justify-content: space-between;
    overflow: hidden;
    background: #fff;
    border-top: 2px solid #c8c8c8;
    border-bottom: 1px solid #bbb;
    font-family: "Liberation Mono", "Noto Sans CJK SC", monospace;
    font-size: 13px;
    line-height: 12px;
}

.messages p {
    height: 12px;
    margin-left: -5px;
    white-space: pre;
}

.messages b {
    font-weight: normal;
    font-size: 14px;
}

/* Taskbar */
.taskbar {
    height: 48px;
    flex: none;
    margin-top: 3px;
    padding-left: 348px;
    display: flex;
    align-items: center;
    border-top: 1px solid #b4b9c4;
    background: linear-gradient(90deg, #e2f0f8, #d6e2f5 18%, #d5dcf3 30%, #d6def3 70%, #e2ebf5);
}

.app {
    position: relative;
    width: 42px;
    height: 38px;
    flex: none;
    display: flex;
    align-items: center;
    justify-content: center;
}

.app svg {
    width: 23px;
    height: 23px;
}

.app.open::after {
    content: "";
    position: absolute;
    bottom: 0;
    width: 6px;
    height: 3px;
    border-radius: 2px;
    background: #7c828e;
}

.app.active, .app.alert {
    width: 36px;
    margin: 0 3px;
    border-radius: 4px;
}

.app.active {
    background: #f0f5fb;
}

.app.active::after {
    width: 15px;
    background: #1b6fb8;
}

.app.alert {
    background: #fbe0e3;
}

.app.alert::after {
    background: #b83030;
}

.search {
    width: 209px;
    height: 30px;
    flex: none;
    margin: 0 3px 0 4px;
    padding: 0 6px 0 9px;
    display: flex;
    align-items: center;
    gap: 8px;
    border-radius: 15px;
    background: #f2f5fc;
    border-bottom: 1px solid #c0c6d4;
}

.search input {
    flex: 1;
    min-width: 0;
    font-size: 14px;
}

.search input::placeholder {
    color: #444;
}

.mag {
    width: 16px;
    height: 16px;
    flex: none;
}

.doodle {
    width: 42px;
    height: 23px;
    flex: none;
}

.tray {
    margin-left: auto;
    padding-right: 6px;
}

.bottom-strip {
    height: 11px;
    flex: none;
    background: #1d1d1d;
    padding: 8px 0 0 395px;
    overflow: hidden;
}

.bottom-strip i {
    display: block;
    width: 205px;
    height: 20px;
    border-radius: 12px;
    background: #f2f2f2;
}
```

FILE: script.js
```javascript
// Paint the stress field of the rope as small coloured elements along its path.
const rope = document.getElementById('rope');
const elements = document.getElementById('elements');
const cool = ['#0018a8', '#0040e8', '#0078ff', '#0078ff', '#00a8ff', '#00d8ff', '#04123c', '#20e8c0'];
const warm = ['#00e878', '#30f040', '#a0f020', '#00e0a0', '#20d0d8', '#0090ff', '#f0a020'];
const hot = [[85, 10], [142, 20], [186, 14], [240, 8], [270, 10], [356, 12], [398, 18]];

let seed = 7;
function random() {
    seed = (seed * 16807) % 2147483647;
    return seed / 2147483647;
}

const total = rope.getTotalLength();
for (let i = 0; i < 1500; i++) {
    const at = random() * total;
    const p = rope.getPointAtLength(at);
    const isHot = hot.some(([mid, half]) => Math.abs(at - mid) < half);
    const colors = isHot && random() < 0.8 ? warm : cool;
    const dot = document.createElementNS('http://www.w3.org/2000/svg', 'rect');
    dot.setAttribute('x', p.x + (random() - 0.5) * 8 - 1);
    dot.setAttribute('y', p.y + (random() - 0.5) * 11 - 1);
    dot.setAttribute('width', 1 + random() * 3);
    dot.setAttribute('height', 1 + random() * 2);
    dot.setAttribute('fill', colors[Math.floor(random() * colors.length)]);
    elements.appendChild(dot);
}
```
